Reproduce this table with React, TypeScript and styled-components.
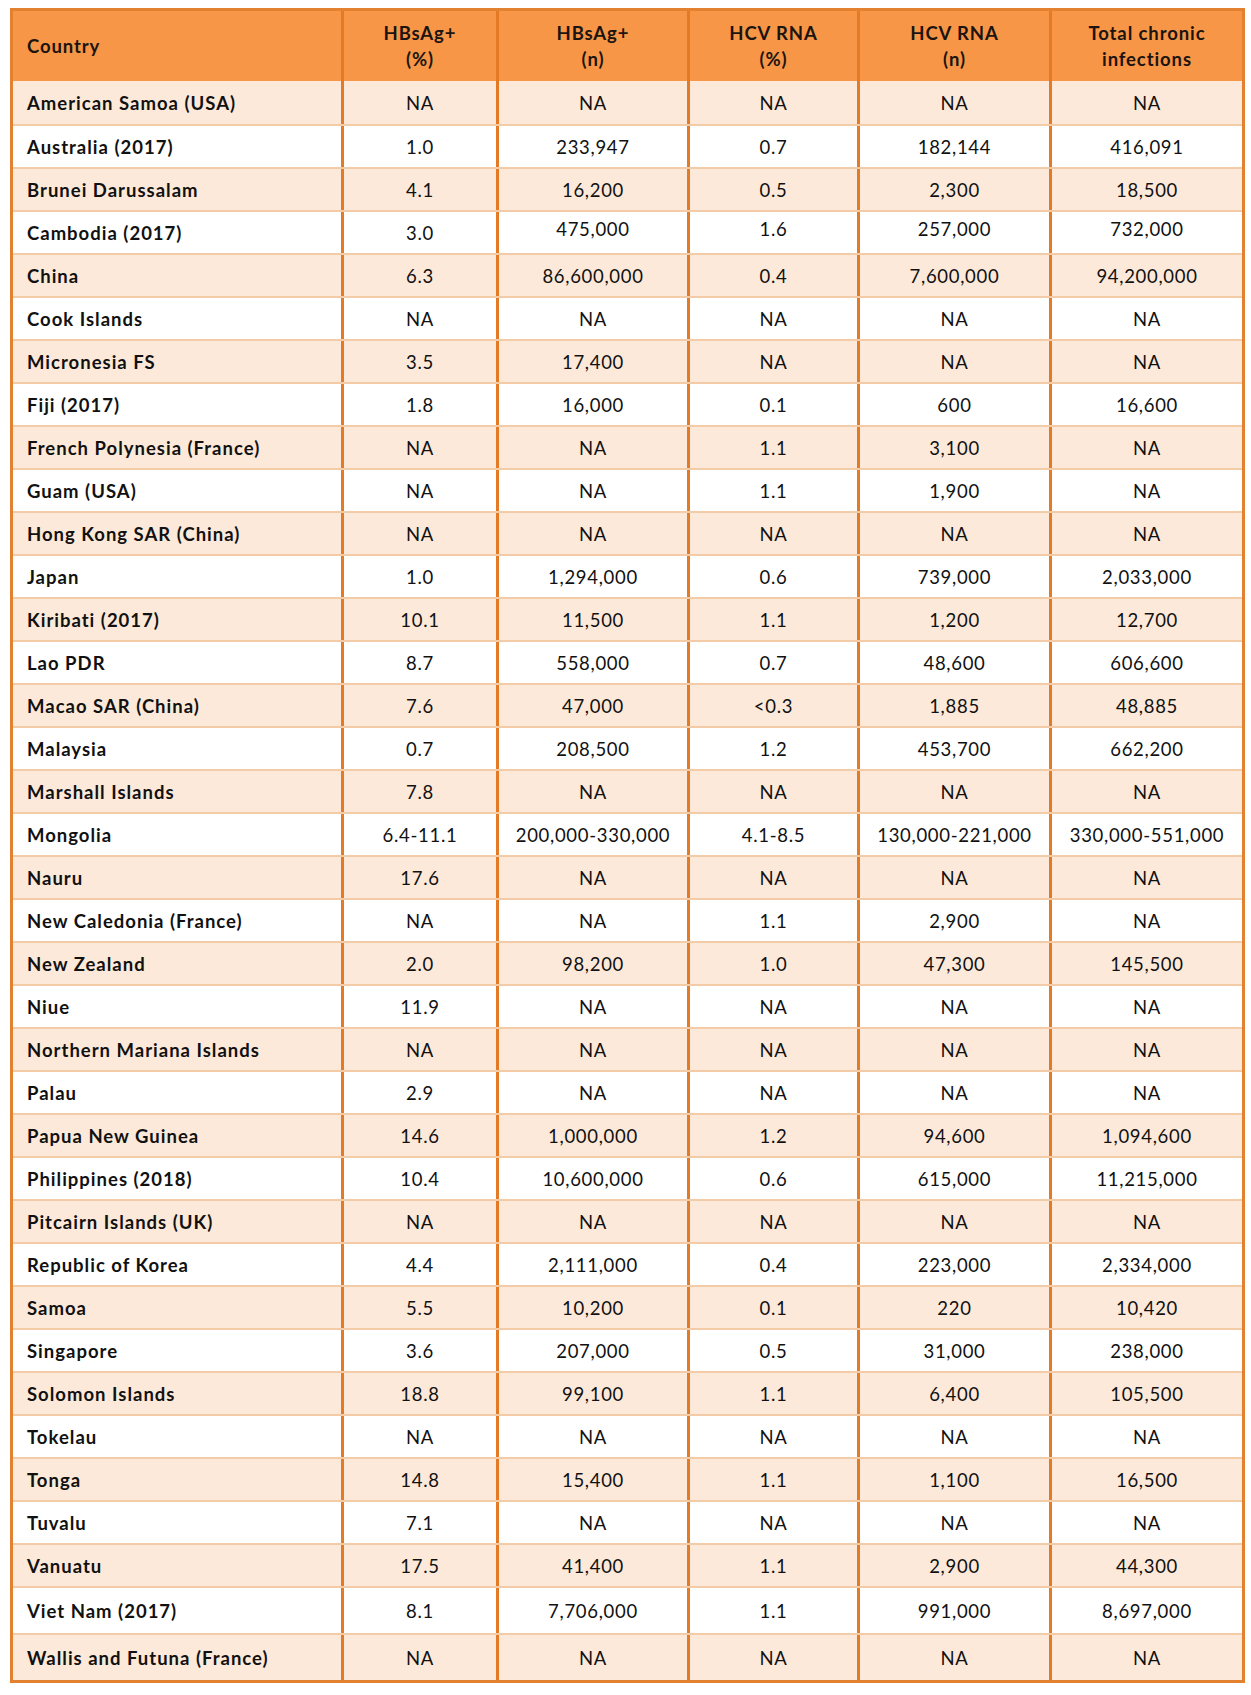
import * as React from 'react';
import styled, {createGlobalStyle} from 'styled-components';

const GlobalStyle = createGlobalStyle`
	body {
		margin: 0;
		background: #ffffff;
		font-family: Lato, "Open Sans", sans-serif;
		color: #111111;
	}
`;

const COLUMNS = '328px 155px 191px 170px 192px 193px';

const Page = styled.div`
	padding: 8px 0 0 10px;
`;

const Table = styled.div`
	width: 1235px;
	border: 3px solid #e2812f;
	box-sizing: border-box;
`;

const HeaderRow = styled.div`
	display: grid;
	grid-template-columns: ${COLUMNS};
	height: 70px;
	background: #f79646;
`;

const HeaderCell = styled.div<{$left?: boolean}>`
	display: flex;
	align-items: center;
	justify-content: ${p => (p.$left ? 'flex-start' : 'center')};
	text-align: ${p => (p.$left ? 'left' : 'center')};
	padding: ${p => (p.$left ? '0 0 0 14px' : '0')};
	font-weight: 700;
	font-size: 18.5px;
	letter-spacing: 0.9px;
	line-height: 26px;
	color: #1c1410;
	border-left: ${p => (p.$left ? 'none' : '3px solid #e27a26')};
`;

const Row = styled.div<{$shade: boolean; $tall?: boolean}>`
	display: grid;
	grid-template-columns: ${COLUMNS};
	height: ${p => (p.$tall ? '47px' : '43px')};
	background: ${p => (p.$shade ? '#fde9d9' : '#ffffff')};
	border-top: 2px solid #f3cba6;
	box-sizing: border-box;
	&:first-of-type {
		border-top: none;
	}
`;

const NameCell = styled.div`
	display: flex;
	align-items: center;
	padding-left: 14px;
	font-weight: 700;
	font-size: 18.5px;
	letter-spacing: 1px;
	white-space: nowrap;
`;

const ValueCell = styled.div<{$raised?: boolean}>`
	display: flex;
	align-items: ${p => (p.$raised ? 'flex-start' : 'center')};
	padding-top: ${p => (p.$raised ? '6px' : '0')};
	justify-content: center;
	font-size: 18.5px;
	letter-spacing: 0.7px;
	white-space: nowrap;
	border-left: 3px solid #e27a26;
`;

type Entry = [string, string, string, string, string, string];

const data: Entry[] = [
	['American Samoa (USA)', 'NA', 'NA', 'NA', 'NA', 'NA'],
	['Australia (2017)', '1.0', '233,947', '0.7', '182,144', '416,091'],
	['Brunei Darussalam', '4.1', '16,200', '0.5', '2,300', '18,500'],
	['Cambodia (2017)', '3.0', '475,000', '1.6', '257,000', '732,000'],
	['China', '6.3', '86,600,000', '0.4', '7,600,000', '94,200,000'],
	['Cook Islands', 'NA', 'NA', 'NA', 'NA', 'NA'],
	['Micronesia FS', '3.5', '17,400', 'NA', 'NA', 'NA'],
	['Fiji (2017)', '1.8', '16,000', '0.1', '600', '16,600'],
	['French Polynesia (France)', 'NA', 'NA', '1.1', '3,100', 'NA'],
	['Guam (USA)', 'NA', 'NA', '1.1', '1,900', 'NA'],
	['Hong Kong SAR (China)', 'NA', 'NA', 'NA', 'NA', 'NA'],
	['Japan', '1.0', '1,294,000', '0.6', '739,000', '2,033,000'],
	['Kiribati (2017)', '10.1', '11,500', '1.1', '1,200', '12,700'],
	['Lao PDR', '8.7', '558,000', '0.7', '48,600', '606,600'],
	['Macao SAR (China)', '7.6', '47,000', '<0.3', '1,885', '48,885'],
	['Malaysia', '0.7', '208,500', '1.2', '453,700', '662,200'],
	['Marshall Islands', '7.8', 'NA', 'NA', 'NA', 'NA'],
	['Mongolia', '6.4-11.1', '200,000-330,000', '4.1-8.5', '130,000-221,000', '330,000-551,000'],
	['Nauru', '17.6', 'NA', 'NA', 'NA', 'NA'],
	['New Caledonia (France)', 'NA', 'NA', '1.1', '2,900', 'NA'],
	['New Zealand', '2.0', '98,200', '1.0', '47,300', '145,500'],
	['Niue', '11.9', 'NA', 'NA', 'NA', 'NA'],
	['Northern Mariana Islands', 'NA', 'NA', 'NA', 'NA', 'NA'],
	['Palau', '2.9', 'NA', 'NA', 'NA', 'NA'],
	['Papua New Guinea', '14.6', '1,000,000', '1.2', '94,600', '1,094,600'],
	['Philippines (2018)', '10.4', '10,600,000', '0.6', '615,000', '11,215,000'],
	['Pitcairn Islands (UK)', 'NA', 'NA', 'NA', 'NA', 'NA'],
	['Republic of Korea', '4.4', '2,111,000', '0.4', '223,000', '2,334,000'],
	['Samoa', '5.5', '10,200', '0.1', '220', '10,420'],
	['Singapore', '3.6', '207,000', '0.5', '31,000', '238,000'],
	['Solomon Islands', '18.8', '99,100', '1.1', '6,400', '105,500'],
	['Tokelau', 'NA', 'NA', 'NA', 'NA', 'NA'],
	['Tonga', '14.8', '15,400', '1.1', '1,100', '16,500'],
	['Tuvalu', '7.1', 'NA', 'NA', 'NA', 'NA'],
	['Vanuatu', '17.5', '41,400', '1.1', '2,900', '44,300'],
	['Viet Nam (2017)', '8.1', '7,706,000', '1.1', '991,000', '8,697,000'],
	['Wallis and Futuna (France)', 'NA', 'NA', 'NA', 'NA', 'NA'],
];

const headers: string[][] = [
	['HBsAg+', '(%)'],
	['HBsAg+', '(n)'],
	['HCV RNA', '(%)'],
	['HCV RNA', '(n)'],
	['Total chronic', 'infections'],
];

export default function App() {
	return (
		<Page>
			<GlobalStyle />
			<Table>
				<HeaderRow>
					<HeaderCell $left>Country</HeaderCell>
					{headers.map(h => (
						<HeaderCell key={h.join(' ')}>
							{h[0]}
							<br />
							{h[1]}
						</HeaderCell>
					))}
				</HeaderRow>
				<div>
					{data.map((row, i) => {
						const raised = row[0] === 'Cambodia (2017)';
						const tall = i >= data.length - 2;
						return (
							<Row key={row[0]} $shade={i % 2 === 0} $tall={tall}>
								<NameCell>{row[0]}</NameCell>
								{row.slice(1).map((v, j) => (
									<ValueCell key={j} $raised={raised && j > 0}>
										{v}
									</ValueCell>
								))}
							</Row>
						);
					})}
				</div>
			</Table>
		</Page>
	);
}
